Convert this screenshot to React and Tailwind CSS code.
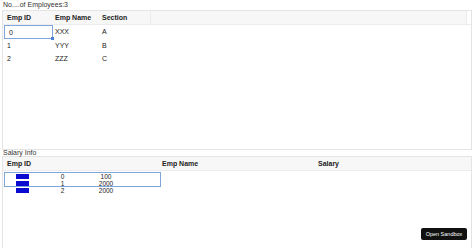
import React from "react";

const employees = [
  { id: "0", name: "XXX", section: "A" },
  { id: "1", name: "YYY", section: "B" },
  { id: "2", name: "ZZZ", section: "C" },
];

const salaries = [
  { id: "0", amount: "100" },
  { id: "1", amount: "2000" },
  { id: "2", amount: "2000" },
];

const App = () => {
  return (
    <div className="relative w-[474px] h-[248px] overflow-hidden bg-white text-[7px] text-[#222] font-['Liberation_Sans',Arial,sans-serif]">
      <div className="pl-[3px] h-[10px] leading-[10px] text-[#333]">No....of Employees:3</div>

      {/* employee grid */}
      <div className="mx-[2px] h-[140px] border border-[#e4e4e4] flex flex-col">
        <div className="flex h-[14px] bg-[#f7f7f7] border-b border-[#ececec] font-bold">
          <div className="w-[49px] pl-[4px] leading-[14px]">Emp ID</div>
          <div className="w-[47px] pl-[3px] leading-[14px]">Emp Name</div>
          <div className="w-[52px] pl-[3px] leading-[14px] border-r border-[#ececec]">Section</div>
          <div className="flex-1" />
          <div className="w-[5px] border-l border-[#ececec] bg-white" />
        </div>
        {employees.map((e, i) => (
          <div key={e.id} className="flex h-[13.5px]">
            <div
              className={`relative w-[49px] pl-[4px] leading-[13.5px] ${
                i === 0 ? "border border-[#7ea6dc] pl-[3px] leading-[11.5px] ml-[1px] w-[49px]" : ""
              }`}
            >
              {e.id}
              {i === 0 && (
                <span className="absolute right-[-2px] bottom-[-2px] w-[3px] h-[3px] bg-[#4a7fd0]" />
              )}
            </div>
            <div className={`w-[47px] pl-[3px] leading-[13.5px] ${i === 0 ? "ml-[-1px]" : ""}`}>{e.name}</div>
            <div className="w-[52px] pl-[3px] leading-[13.5px]">{e.section}</div>
          </div>
        ))}
      </div>

      <div className="pl-[3px] h-[6px] leading-[6px] text-[#333]">Salary Info</div>

      {/* salary grid */}
      <div className="mx-[2px] h-[100px] border border-[#e4e4e4] flex flex-col">
        <div className="flex h-[14px] bg-[#f7f7f7] border-b border-[#ececec] font-bold">
          <div className="w-[155px] pl-[4px] leading-[14px]">Emp ID</div>
          <div className="w-[156px] pl-[4px] leading-[14px]">Emp Name</div>
          <div className="w-[140px] pl-[4px] leading-[14px]">Salary</div>
          <div className="flex-1" />
        </div>
        <div className="ml-[1px] mt-[1px] w-[157px] h-[15px] border border-[#7ea6dc]">
          <div className="flex flex-col text-[6.5px]">
            {salaries.map((s) => (
              <div key={s.id} className="flex items-center h-[7px] pl-[11px]">
                <span className="w-[13px] h-[5.5px] bg-[#0a0ad0]" />
                <span className="w-[67px] text-center leading-[7px]">{s.id}</span>
                <span className="w-[20px] text-center leading-[7px]">{s.amount}</span>
              </div>
            ))}
          </div>
        </div>
      </div>

      <button className="absolute left-[421px] top-[228px] w-[46px] h-[12px] rounded-[2px] bg-[#111] text-white text-[5.5px] leading-[12px] text-center">
        Open Sandbox
      </button>
    </div>
  );
};

export default App;
